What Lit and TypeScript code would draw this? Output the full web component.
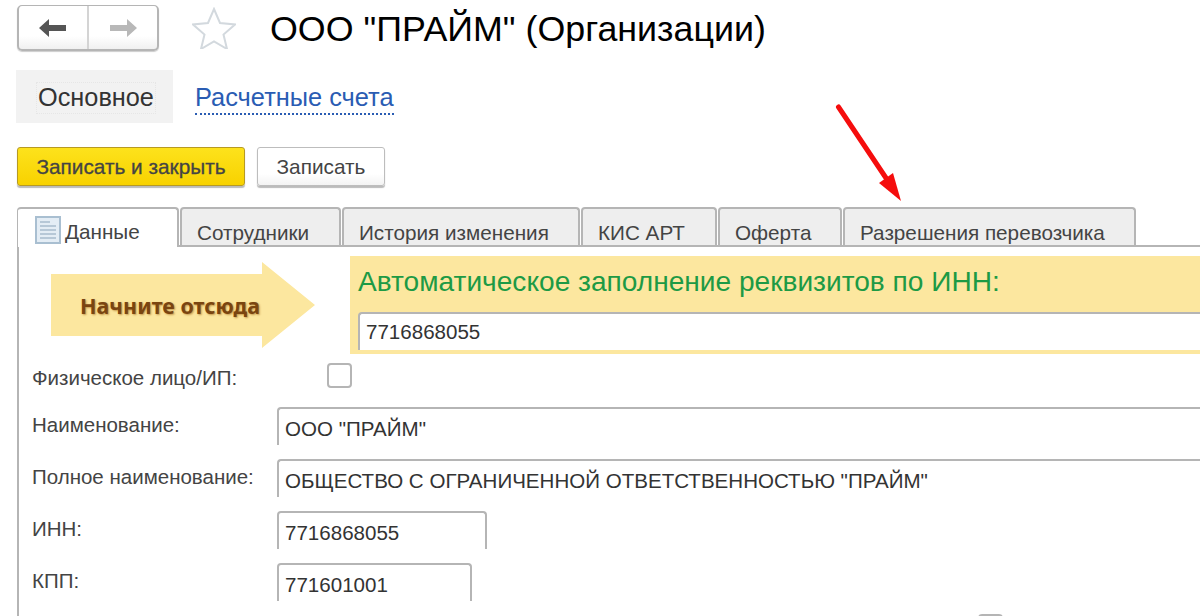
import { LitElement, html, css } from "lit";
import { customElement } from "lit/decorators.js";

@customElement("app-root")
export class AppRoot extends LitElement {
  static styles = css`
    :host { display: block; position: relative; width: 1200px; height: 616px; overflow: hidden; background: #fff; font-family: "Liberation Sans", Arial, sans-serif; color: #333; }
    .head { display: flex; align-items: center; height: 46px; padding: 5px 0 0 17px; }
    .nav { display: flex; width: 142px; height: 46px; box-sizing: border-box; border: 2px solid #b5b5b5; border-top-width: 1px; border-radius: 5px; background: linear-gradient(#fff 70%, #f0f0f0); box-shadow: 0 1px 1px #ccc; }
    .nav div { flex: 1; display: flex; align-items: center; justify-content: center; }
    .nav div + div { border-left: 2px solid #d4d4d4; }
    .star { margin-left: 33px; display: block; }
    h1 { margin: 0 0 0 34px; font-weight: 400; font-size: 35.8px; color: #000; white-space: nowrap; line-height: 46px; position: relative; top: 1px; }
    .sections { display: flex; align-items: center; margin: 19px 0 0 16px; height: 53px; }
    .current { width: 157px; height: 53px; box-sizing: border-box; background: #f2f2f2; display: flex; align-items: center; justify-content: center; padding-left: 3px; font-size: 25.300px; color: #333; }
    .current span { outline: 1px dotted #e6e6e6; padding: 0 1px 1px; background: #f2f2f2; position: relative; top: 1px; }
    .link { margin-left: 22px; font-size: 25.400px; color: #2a5cb3; border-bottom: 2px dotted #2a5cb3; line-height: 30px; padding-bottom: 1px; position: relative; top: 2px; }
    .actions { display: flex; gap: 12px; margin: 24px 0 0 17px; height: 40px; }
    button { font-family: inherit; font-size: 20.800px; padding: 0; height: 39px; border-radius: 3px; box-sizing: border-box; }
    .primary { width: 228px; background: linear-gradient(#fde21c, #f8d200); border: 1px solid #b79a22; color: #444; box-shadow: 0 2px 1px #bbb; -webkit-text-stroke: .3px #444; }
    .secondary { width: 128px; background: linear-gradient(#fff 70%, #f3f3f3); border: 1px solid #bdbdbd; color: #444; box-shadow: 0 2px 1px #bbb; }
    .tabs { display: flex; margin: 20px 0 0 17px; height: 38px; gap: 1px; border-bottom: 2px solid #b5b5b5; }
    .tab { box-sizing: border-box; height: 38px; background: #eee; border: 2px solid #b5b5b5; border-bottom: 0; border-radius: 4px 4px 0 0; font-size: 20.700px; color: #444; display: flex; align-items: flex-end; padding: 0 0 0 15px; white-space: nowrap; line-height: 24px; }
    .tab.on { background: #fff; height: 40px; padding: 0 0 3px 17px; gap: 3px; border-left: 1px solid #b5b5b5; position: relative; z-index: 1; }
    .body { height: 369px; margin-left: 17px; border-left: 2px solid #b5b5b5; box-sizing: border-box; }
    .auto { display: flex; padding-top: 9px; height: 107px; box-sizing: border-box; }
    .start { margin: 6px 0 0 32px; width: 264px; height: 86px; background: #fce79f; clip-path: polygon(0 12px, 211px 12px, 211px 0, 264px 43px, 211px 86px, 211px 74px, 0 74px); display: flex; align-items: center; padding: 0 0 0 29px; box-sizing: border-box; font-family: "Noto Sans", sans-serif; font-weight: 700; font-size: 21.500px; color: #7a4510; text-shadow: 1px 1px 2px rgba(160,100,20,.6); white-space: nowrap; }
    .panel { margin-left: 35px; flex: 1; height: 98px; box-sizing: border-box; background: #fce79f; padding: 8px 0 0 8px; }
    .panel h2 { margin: 0; font-weight: 400; font-size: 28.100px; line-height: 36px; color: #1d9a45; white-space: nowrap; }
    .rows { display: flex; flex-direction: column; padding-left: 13px; }
    .row { display: flex; height: 52px; box-sizing: border-box; font-size: 20.500px; color: #444; white-space: nowrap; }
    .row label { width: 245px; flex: none; line-height: 36px; }
    .field { height: 38px; box-sizing: border-box; border: 2px solid #b5b5b5; border-bottom: 0; border-radius: 4px 4px 0 0; background: #fff; font-size: 20.550px; line-height: 40px; color: #333; padding-left: 6px; white-space: nowrap; overflow: hidden; }
    .wide { flex: 1; border-right: 0; border-radius: 4px 0 0 0; }
    .panel .field { line-height: 36px; margin-top: 12px; }
    .inn { width: 210px; }
    .kpp { width: 195px; }
    .checkrow { height: 53px; padding-top: 9px; }
    .checkrow label { width: 295px; line-height: 30px; }
    .check { width: 25px; height: 25px; box-sizing: border-box; border: 2px solid #b5b5b5; border-radius: 4px; background: #fff; }
    .stub { position: absolute; left: 978px; top: 614px; width: 25px; height: 25px; box-sizing: border-box; border: 2px solid #b5b5b5; border-radius: 4px; }
    .pointer { position: absolute; left: 830px; top: 100px; }
  `;

  render() {
    return html`
      <div class="head">
        <div class="nav">
          <div><svg width="30" height="22" viewBox="0 0 30 22"><path d="M1 11 11 2v6h17v6H11v6z" fill="#555"/></svg></div>
          <div><svg width="30" height="22" viewBox="0 0 30 22"><path d="M29 11 19 2v6H2v6h17v6z" fill="#b8b8b8"/></svg></div>
        </div>
        <svg class="star" width="44" height="42" viewBox="0 0 44 42"><path d="M22 2l6 14 15 1.500-11.500 10 3.500 14.500-13-7.700-13 7.700 3.500-14.500L1 17.500 16 16z" fill="#fff" stroke="#d3d9de" stroke-width="2"/></svg>
        <h1>ООО "ПРАЙМ" (Организации)</h1>
      </div>
      <div class="sections">
        <div class="current"><span>Основное</span></div>
        <div class="link">Расчетные счета</div>
      </div>
      <div class="actions">
        <button class="primary">Записать и закрыть</button>
        <button class="secondary">Записать</button>
      </div>
      <div class="tabs">
        <div class="tab on" style="width:162px">
          <svg width="27" height="28" viewBox="0 0 27 28"><rect x="1" y="1" width="24" height="26" fill="#e4edf5" stroke="#a9bfd1" stroke-width="2"/><path d="M5 6h10M5 10h16M5 14h16M5 18h16M5 22h16" stroke="#a8bccd" stroke-width="1.500"/></svg>
          <span>Данные</span>
        </div>
        <div class="tab" style="width:161px">Сотрудники</div>
        <div class="tab" style="width:238px">История изменения</div>
        <div class="tab" style="width:136px">КИС АРТ</div>
        <div class="tab" style="width:124px">Оферта</div>
        <div class="tab" style="width:293px">Разрешения перевозчика</div>
      </div>
      <div class="body">
        <div class="auto">
          <div class="start">Начните отсюда</div>
          <div class="panel">
            <h2>Автоматическое заполнение реквизитов по ИНН:</h2>
            <div class="field wide">7716868055</div>
          </div>
        </div>
        <div class="rows">
          <div class="row checkrow"><label>Физическое лицо/ИП:</label><div class="check"></div></div>
          <div class="row"><label>Наименование:</label><div class="field wide">ООО "ПРАЙМ"</div></div>
          <div class="row"><label>Полное наименование:</label><div class="field wide">ОБЩЕСТВО С ОГРАНИЧЕННОЙ ОТВЕТСТВЕННОСТЬЮ "ПРАЙМ"</div></div>
          <div class="row"><label>ИНН:</label><div class="field inn">7716868055</div></div>
          <div class="row"><label>КПП:</label><div class="field kpp">771601001</div></div>
        </div>
      </div>
      <div class="stub"></div>
      <svg class="pointer" width="80" height="110" viewBox="830 100 80 110">
        <path d="M838.500 107 886 178" stroke="#f50d0d" stroke-width="5" stroke-linecap="round" fill="none"/>
        <path d="M901 201 879 183 893 173z" fill="#f50d0d"/>
      </svg>
    `;
  }
}
